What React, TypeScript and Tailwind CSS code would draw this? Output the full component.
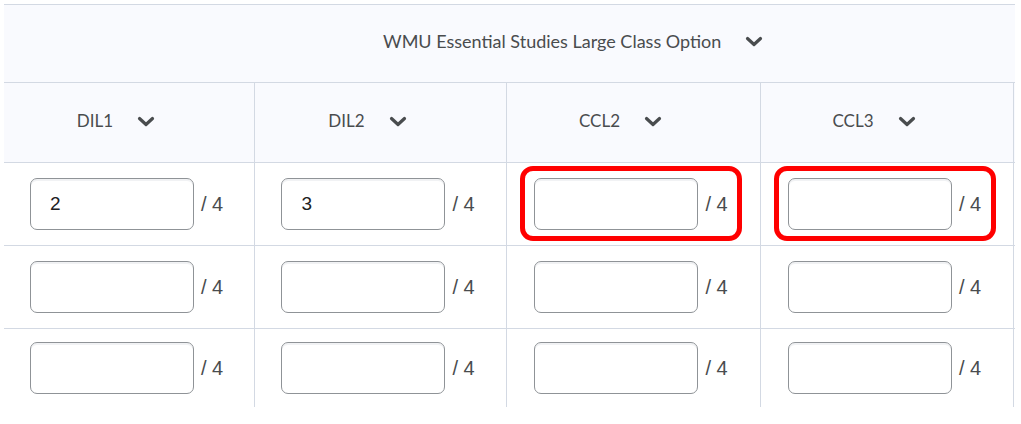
import React from 'react';

const Chevron = () => (
  <svg width="18" height="11" viewBox="0 0 18 11" className="shrink-0">
    <path d="M2.5 2.5 L9 8.5 L15.5 2.5" fill="none" stroke="#494c4e" strokeWidth="3.2" strokeLinecap="round" strokeLinejoin="round" />
  </svg>
);

const columns = ['DIL1', 'DIL2', 'CCL2', 'CCL3'];
const widths = ['w-[251px]', 'w-[252px]', 'w-[254px]', 'w-[253px]'];

const rows = [
  ['2', '3', '', ''],
  ['', '', '', ''],
  ['', '', '', ''],
];

const ScoreCell = ({ value, highlight, width, height }: { value: string; highlight: boolean; width: string; height: string }) => (
  <div className={`relative ${width} ${height} border-r border-[#d3d9e3] flex items-center justify-center gap-[7px] pr-[5px] bg-white`}>
    <input
      defaultValue={value}
      className="w-[164px] h-[52px] rounded-[7px] border border-[#8f9397] shadow-[inset_0_2px_0_0_#f1f2f4] pl-[19px] text-[19px] text-[#202122] outline-none bg-white font-['Liberation_Sans',Arial,sans-serif]"
    />
    <span className="text-[20px] text-[#494c4e] font-['Liberation_Sans',Arial,sans-serif] whitespace-pre">/ 4</span>
    {highlight && (
      <div className="absolute left-[13px] top-[3px] w-[222px] h-[75px] rounded-[13px] border-[5px] border-[#ff0000] pointer-events-none" />
    )}
  </div>
);

export default function App() {
  return (
    <div className="w-[1021px] h-[424px] bg-white pl-[4px] pt-[4px] font-['Lato','Liberation_Sans',sans-serif]">
      <div className="w-[1011px] border-t border-[#d3d9e3]">
        <div className="h-[78px] bg-[#f9fafe] border-b border-[#d3d9e3] flex items-center pl-[379px] pb-[4px] gap-[24px]">
          <span className="text-[18px] text-[#494c4e]">WMU Essential Studies Large Class Option</span>
          <Chevron />
        </div>
        <div className="flex border-b border-[#d3d9e3] bg-[#f9fafe]">
          {columns.map((c, i) => (
            <div key={c} className={`${widths[i]} h-[79px] border-r border-[#d3d9e3] flex items-center justify-center gap-[24px] pr-[26px] pb-[3px]`}>
              <span className="text-[17px] text-[#494c4e]">{c}</span>
              <Chevron />
            </div>
          ))}
        </div>
        {rows.map((r, ri) => (
          <div key={ri} className={`flex ${ri < rows.length - 1 ? 'border-b border-[#d3d9e3]' : ''}`}>
            {r.map((v, ci) => (
              <ScoreCell
                key={ci}
                value={v}
                width={widths[ci]}
                height={ri < rows.length - 1 ? 'h-[82px]' : 'h-[78px]'}
                highlight={ri === 0 && ci >= 2}
              />
            ))}
          </div>
        ))}
      </div>
    </div>
  );
}
